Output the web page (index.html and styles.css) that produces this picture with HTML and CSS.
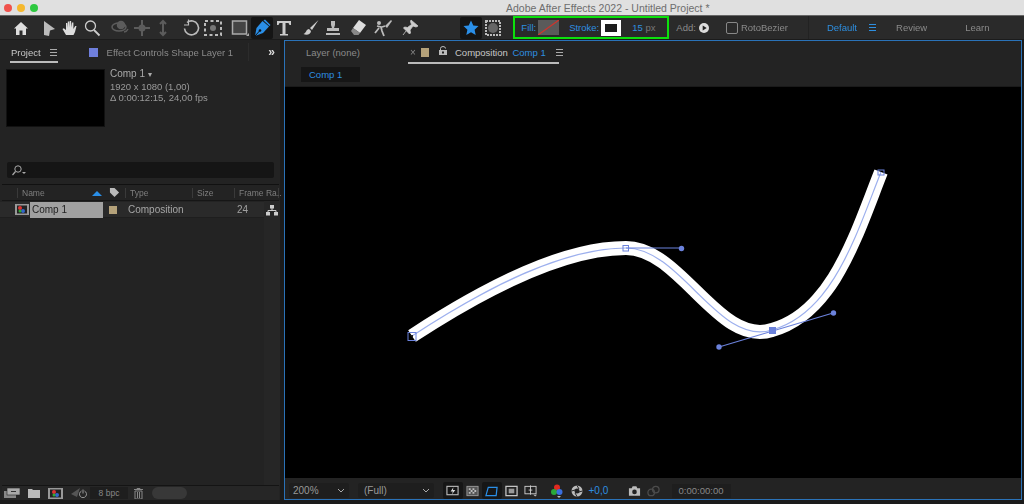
FILE: index.html
```html
<!DOCTYPE html>
<html lang="en">
<head>
<meta charset="utf-8">
<title>Adobe After Effects 2022 - Untitled Project *</title>
<link rel="stylesheet" href="styles.css">
</head>
<body>
<div class="app">
  <header class="titlebar">
    <div class="lights"><span class="light red"></span><span class="light yellow"></span><span class="light green"></span></div>
    <div class="title">Adobe After Effects 2022 - Untitled Project *</div>
  </header>

  <div class="toolbar">
    <span class="tool first"><svg viewBox="0 0 22 22"><path d="M4 11.500 11 5l7 6.500h-2V18h-3.500v-4.500h-3V18H6v-6.500z" fill="#ddd"/></svg></span>
    <span class="tool g"><svg viewBox="0 0 22 22"><path d="M6 4l11 8-5 1.500-1 5.500-5-1z" fill="#bbb"/></svg></span>
    <span class="tool"><svg viewBox="0 0 22 22"><path d="M7 18 3.500 12l1.300-.8L7 13V6h1.300l.5 5V4.500h1.400l.5 6V4h1.400l.4 6.500L13 5.500h1.400V12l1.800-3h1.300L16 15l-1.500 3z" fill="#ddd"/></svg></span>
    <span class="tool"><svg viewBox="0 0 22 22" fill="none" stroke="#ccc" stroke-width="1.300"><circle cx="9.500" cy="9" r="5"/><path d="m13 13 5.500 5.500" stroke-width="1.800"/></svg></span>
    <span class="tool g"><svg viewBox="0 0 22 22" fill="none" stroke="#5c5c5c" stroke-width="1.500"><ellipse cx="10" cy="10" rx="7" ry="4"/><circle cx="12" cy="8" r="3.500" fill="#5c5c5c"/><path d="M15 15a5 5 0 0 0 4-3"/></svg></span>
    <span class="tool"><svg viewBox="0 0 22 22" fill="none" stroke="#5c5c5c" stroke-width="2"><path d="M11 3v16M3 11h16"/><circle cx="11" cy="11" r="2.500" fill="#5c5c5c"/></svg></span>
    <span class="tool"><svg viewBox="0 0 22 22" fill="none" stroke="#5c5c5c" stroke-width="2"><path d="M11 4v14M8 7l3-3 3 3M8 15l3 3 3-3"/></svg></span>
    <span class="tool g"><svg viewBox="0 0 22 22" fill="none" stroke="#bbb" stroke-width="1.600"><path d="M7 5.500a7 7 0 1 1-2.500 6"/><path d="M8.500 2.500v5.500H4" stroke-width="1.200"/></svg></span>
    <span class="tool"><svg viewBox="0 0 22 22" fill="none" stroke="#bbb" stroke-width="2"><rect x="3" y="4" width="16" height="14" stroke-dasharray="3 2.500"/><circle cx="11" cy="11" r="3" fill="#777" stroke="none"/></svg></span>
    <span class="tool g"><svg viewBox="0 0 22 22"><rect x="3.500" y="4" width="14" height="13" fill="#444" stroke="#aaa" stroke-width="1.500"/><path d="M17 19h3v-3z" fill="#aaa"/></svg></span>
    <span class="tool active"><svg viewBox="0 0 22 22"><path d="M4 19l1.500-8 6-7 6.500 5.500-6 6.500z" fill="#2a8fe8"/><path d="M4 19l4.500-5" stroke="#111"/><circle cx="9" cy="13.500" r="1.300" fill="#111"/><path d="M12.500 3.500l6 5.500 1-1-5.500-5.500z" fill="#2a8fe8"/></svg></span>
    <span class="tool"><svg viewBox="0 0 22 22"><path d="M4 4h14v4h-1.500l-1-2H12.500v11H15v1.500H7V17h2.500V6H6.500l-1 2H4z" fill="#ccc"/></svg></span>
    <span class="tool g"><svg viewBox="0 0 22 22"><path d="M18.500 3 10 11l2 2zM9 12c-3 0-2.500 4-5.500 5 3 1.500 7.500.5 7.500-3z" fill="#ccc"/></svg></span>
    <span class="tool"><svg viewBox="0 0 22 22"><path d="M9 4h4v4l-1 3h5v3H5v-3h5L9 8zM4 16h14v2H4z" fill="#bbb"/></svg></span>
    <span class="tool e"><svg viewBox="0 0 22 22"><path d="M12 3l7 5-6 8-7-5z" fill="#ddd"/><path d="M6 11l7 5-1.500 2H7l-3-4z" fill="#888"/></svg></span>
    <span class="tool e"><svg viewBox="0 0 22 22"><circle cx="7" cy="6" r="2" fill="#bbb"/><path d="M5 9l4 1 1 4 2 5M7 11l-4 5M10 10l3-1" fill="none" stroke="#bbb" stroke-width="1.800"/><path d="M13 9l6-6 1 1-5 7z" fill="#bbb"/></svg></span>
    <span class="tool pin"><svg viewBox="0 0 22 22"><path d="M12 3l7 6-2 1-3-1-3 4 .5 3-1 1-6-6 1-1 3 .5 4-3-1-3zM7 14l-3 4" fill="#ccc" stroke="#ccc" stroke-width=".8"/></svg></span>
    <span class="tool star active"><svg viewBox="0 0 22 22"><path d="m11 3.500 2.300 5 5.200.6-3.900 3.600 1.100 5.300-4.700-2.700-4.700 2.700 1.100-5.300-3.900-3.600 5.200-.6z" fill="#2a8fe8"/></svg></span>
    <span class="tool"><svg viewBox="0 0 22 22"><rect x="4" y="4" width="14" height="14" fill="none" stroke="#bbb" stroke-width="2" stroke-dasharray="2 1"/><circle cx="11" cy="11" r="5" fill="#666"/></svg></span>
    <div class="shape-opts">
      <span class="blue lbl">Fill:</span>
      <svg class="fill-sw" viewBox="0 0 21 15"><rect width="21" height="15" fill="#5a5a5a"/><path d="M0 15 21 0" stroke="#d0342c" stroke-width="1.200"/></svg>
      <span class="blue lbl stroke-lbl">Stroke:</span>
      <span class="stroke-sw"><span class="stroke-in"></span></span>
      <span class="px"><span class="blue">15</span> px</span>
    </div>
    <span class="add">Add:</span>
    <svg class="play" viewBox="0 0 10 10"><circle cx="5" cy="5" r="5" fill="#ddd"/><path d="M3.700 2.500v5L7.700 5z" fill="#222"/></svg>
    <span class="check"></span>
    <span class="roto">RotoBezier</span>
    <span class="ws-sep"></span>
    <span class="blue default">Default</span>
    <span class="hamb blue-hamb"></span>
    <span class="ws review">Review</span>
    <span class="ws learn">Learn</span>
  </div>

  <main class="main">
    <section class="project">
      <div class="tabs">
        <span class="tab-project">Project</span>
        <span class="hamb"></span>
        <span class="sq-blue"></span>
        <span class="tab-effects">Effect Controls Shape Layer 1</span>
        <span class="tabs-sep"></span>
        <span class="more">&#187;</span>
      </div>
      <div class="info">
        <div class="thumb"></div>
        <div class="meta">
          <div class="meta-name">Comp 1 <span class="caret">&#9662;</span></div>
          <div>1920 x 1080 (1,00)</div>
          <div>&#916; 0:00:12:15, 24,00 fps</div>
        </div>
      </div>
      <div class="search">
        <svg viewBox="0 0 16 12"><circle cx="7" cy="5" r="3.200" fill="none" stroke="#aaa"/><path d="M4.500 7.500 1.500 11" stroke="#aaa" stroke-width="1.200"/><path d="M11 8h4l-2 2z" fill="#aaa"/></svg>
      </div>
      <div class="thead">
        <span class="col c-name">Name<svg class="sort" viewBox="0 0 10 5"><path d="M0 5 5 0l5 5z" fill="#2a8fe8"/></svg></span>
        <span class="col c-tag"><svg viewBox="0 0 12 12"><path d="M1 1h5l5 5-5 5-5-5z" fill="#bbb"/></svg></span>
        <span class="col c-type">Type</span>
        <span class="col c-size">Size</span>
        <span class="col c-rate">Frame Ra..</span>
      </div>
      <div class="listing">
        <div class="rows">
          <div class="row">
            <svg class="comp-ic" viewBox="0 0 14 11"><rect width="14" height="11" fill="#999"/><rect x="2" y="1.500" width="10" height="8" fill="#222"/><circle cx="5" cy="4" r="2" fill="#d33"/><circle cx="8" cy="7" r="2" fill="#36c"/><circle cx="5" cy="7" r="1.500" fill="#3a3"/></svg>
            <span class="r-name">Comp 1</span>
            <span class="r-sw"></span>
            <span class="r-type">Composition</span>
            <span class="r-rate">24</span>
          </div>
        </div>
        <div class="side">
          <svg viewBox="0 0 12 11"><rect x="4" y="0" width="4" height="3.500" fill="#ccc"/><rect x="0" y="7" width="4" height="3.500" fill="#ccc"/><rect x="8" y="7" width="4" height="3.500" fill="#ccc"/><path d="M6 3v2.500M2 7V5.500h8V7" fill="none" stroke="#ccc"/></svg>
        </div>
      </div>
      <div class="pfoot">
        <svg class="f-ic" viewBox="0 0 16 10"><rect x="0" y="3" width="12" height="7" fill="#888"/><rect x="3" y="0" width="13" height="7" fill="#aaa" stroke="#222" stroke-width=".6"/><rect x="7" y="3" width="5" height="1" fill="#333"/></svg>
        <svg class="f-ic f-folder" viewBox="0 0 12 9"><path d="M0 0h4l1 1h7v8H0z" fill="#bbb"/></svg>
        <svg class="f-ic f-comp" viewBox="0 0 15 11"><rect width="15" height="11" fill="#999"/><rect x="2" y="1.500" width="11" height="8" fill="#222"/><circle cx="6" cy="4" r="2" fill="#d33"/><circle cx="9" cy="7" r="2" fill="#36c"/><circle cx="6" cy="7" r="1.500" fill="#3a3"/></svg>
        <svg class="f-ic f-power" viewBox="0 0 16 10"><path d="M0 6 9 0 6 9z" fill="#555"/><path d="M10.500 3a3.500 3.500 0 1 0 3 0M12 1.500v4" fill="none" stroke="#999"/></svg>
        <span class="bpc">8 bpc</span>
        <svg class="f-ic f-trash" viewBox="0 0 9 11"><path d="M0 1.500h9M3 1.500V.5h3v1M1 3h7v8H1zM3.500 4v6M5.500 4v6" fill="none" stroke="#888"/></svg>
        <span class="pill"></span>
      </div>
    </section>

    <section class="comp">
      <div class="ctabs">
        <span class="c-layer">Layer (none)</span>
        <span class="c-close">&times;</span>
        <span class="sq-tan"></span>
        <svg class="lock" viewBox="0 0 8 9"><path d="M1.500 4V2.500a2.500 2 0 0 1 5 0" fill="none" stroke="#bbb"/><rect x="0" y="4" width="8" height="5" fill="#bbb"/><rect x="3" y="5.500" width="2" height="2" fill="#222"/></svg>
        <span class="c-comp">Composition <span class="blue comp-link">Comp 1</span></span>
        <span class="hamb"></span>
      </div>
      <div class="crumbs"><span class="crumb">Comp 1</span></div>
      <div class="viewer">
        <svg class="art" viewBox="0 0 736 391">
          <g transform="translate(-285 -87)">
            <path class="st-white" d="M412 336C490 285 565 248 626 248C681 248 719 347 772 330C833 313 856 235 881 172"/>
            <path class="st-path" d="M412 336C490 285 565 248 626 248C681 248 719 347 772 330C833 313 856 235 881 172"/>
            <path class="st-handle" d="M626 248H681M719 347 833 313"/>
            <circle class="dot" cx="681.500" cy="248.500" r="2.700"/>
            <circle class="dot" cx="719" cy="347" r="2.700"/>
            <circle class="dot" cx="833.500" cy="313" r="2.700"/>
            <rect class="pt" x="623" y="245.500" width="5.500" height="5.500"/>
            <rect class="pt" x="408" y="332.500" width="8" height="8"/>
            <path class="pt-dark" d="M410 335l3 3v-3z"/>
            <rect class="pt" x="878" y="170" width="6" height="5"/>
            <rect class="pt-fill" x="769" y="327" width="7" height="7"/>
          </g>
        </svg>
      </div>
      <div class="cfoot">
        <span class="sel sel-zoom">200%<svg viewBox="0 0 8 5"><path d="M1 1l3 3 3-3" fill="none" stroke="#aaa"/></svg></span>
        <span class="sel sel-res">(Full)<svg viewBox="0 0 8 5"><path d="M1 1l3 3 3-3" fill="none" stroke="#aaa"/></svg></span>
        <span class="cb cb-first act"><svg viewBox="0 0 14 12"><rect x="1" y="1" width="12" height="9" fill="none" stroke="#bbb" stroke-width="1.200"/><path d="M8 2 5 6.500h2.500L6 10l4-5H7.500z" fill="#ddd"/></svg></span>
        <span class="cb"><svg viewBox="0 0 14 12"><rect x="1" y="1" width="12" height="10" fill="#555" stroke="#999"/><path d="M3 3h2v2H3zM7 3h2v2H7zM5 5h2v2H5zM9 5h2v2H9zM3 7h2v2H3zM7 7h2v2H7z" fill="#bbb"/></svg></span>
        <span class="cb act"><svg viewBox="0 0 14 12"><path d="M3.500 2H13l-1 9H1z" fill="none" stroke="#2a8fe8" stroke-width="1.300"/></svg></span>
        <span class="cb"><svg viewBox="0 0 14 12"><rect x="1" y="1" width="12" height="10" fill="none" stroke="#ccc" stroke-width="1.300"/><rect x="4" y="3.500" width="6" height="5" fill="#999"/></svg></span>
        <span class="cb"><svg viewBox="0 0 14 12"><rect x="1" y="1" width="12" height="8" fill="none" stroke="#ccc"/><path d="M7 0v10M5 5h4" stroke="#ccc"/><path d="M10 10h4l-2 2z" fill="#bbb"/></svg></span>
        <span class="cb cb-rgb"><svg viewBox="0 0 14 14"><circle cx="7" cy="3.500" r="3" fill="#e02a20"/><circle cx="4" cy="8" r="3" fill="#2aa838"/><circle cx="9.500" cy="8" r="3" fill="#3a6fe0"/><path d="M7 12h4l-2 2z" fill="#bbb"/></svg></span>
        <span class="cb cb-exp"><svg viewBox="0 0 14 14"><circle cx="7" cy="7" r="5.500" fill="#bbb"/><circle cx="7" cy="7" r="2.500" fill="#222"/><path d="M7 1.500 9 5M12.500 7l-3.500 1M7 12.500 5 9M1.500 7 5 6" stroke="#222"/></svg></span>
        <span class="blue exp-val">+0,0</span>
        <span class="cb cb-cam"><svg viewBox="0 0 14 12"><path d="M1 3h3l1-2h4l1 2h3v8H1z" fill="#bbb"/><circle cx="7" cy="7" r="2.500" fill="#222"/></svg></span>
        <span class="cb"><svg viewBox="0 0 14 12"><circle cx="4.500" cy="7.500" r="3.500" fill="none" stroke="#4c4c4c" stroke-width="1.400"/><circle cx="9.500" cy="4.500" r="3.500" fill="none" stroke="#4c4c4c" stroke-width="1.400"/></svg></span>
        <span class="time">0:00:00:00</span>
      </div>
    </section>
  </main>
</div>
</body>
</html>
```

FILE: styles.css
```css
* { box-sizing: border-box; }
html, body { margin: 0; padding: 0; }
body { width: 1024px; height: 504px; overflow: hidden; background: #1b1b1b; font-family: "Liberation Sans", Arial, sans-serif; font-size: 9.500px; color: #a6a6a6; }
svg { display: block; }
.app { display: flex; flex-direction: column; height: 504px; filter: blur(0.35px); }
.blue { color: #2e8fe0; }

.titlebar { height: 16px; background: #e0e0e0; border-bottom: 1px solid #666; display: flex; align-items: center; flex-shrink: 0; }
.lights { display: flex; gap: 5px; padding-left: 4px; }
.light { width: 8px; height: 8px; border-radius: 50%; }
.red { background: #f0524c; }
.yellow { background: #f5b82e; }
.green { background: #2ec840; }
.title { margin-left: 468px; font-size: 10.500px; color: #6e6e6e; white-space: nowrap; }

.toolbar { height: 23px; background: #2a2a2a; display: flex; align-items: center; flex-shrink: 0; }
.tool { width: 22px; height: 22px; flex-shrink: 0; margin-right: -0.300px; }
.tool svg { width: 22px; height: 22px; }
.tool.first { margin-left: 10px; }
.tool.g { margin-left: 6px; }
.tool.e { margin-left: 3px; }
.tool.pin { margin-left: 6px; }
.tool.star { margin-left: 39px; }
.tool.active { background: #151515; border-radius: 2px; }
.shape-opts { width: 156px; height: 23px; margin-left: 10px; border: 2px solid #0ce00c; display: flex; align-items: center; padding-left: 6px; }
.lbl { font-size: 9.500px; }
.fill-sw { width: 21px; height: 15px; margin-left: 2px; }
.stroke-lbl { margin-left: 10px; }
.stroke-sw { width: 20px; height: 16px; margin-left: 2px; background: #fff; padding: 4px; }
.stroke-in { display: block; width: 12px; height: 8px; background: #1c1c1c; }
.px { margin-left: 11px; color: #777; white-space: nowrap; }
.add { margin-left: 7px; color: #8a8a8a; }
.play { width: 10px; height: 10px; margin-left: 3px; }
.check { width: 12px; height: 12px; margin-left: 17px; border: 1.500px solid #888; border-radius: 2px; }
.roto { margin-left: 3px; color: #8a8a8a; }
.ws-sep { width: 1px; height: 23px; margin-left: 20px; background: #222; }
.default { margin-left: 18px; }
.hamb { display: block; width: 7px; height: 7px; border-top: 1px solid #aaa; border-bottom: 1px solid #aaa; position: relative; flex-shrink: 0; }
.hamb::after { content: ""; position: absolute; left: 0; right: 0; top: 2px; height: 1px; background: #aaa; }
.blue-hamb { margin-left: 12px; border-color: #2e8fe0; }
.blue-hamb::after { background: #2e8fe0; }
.ws { color: #8a8a8a; }
.review { margin-left: 20px; }
.learn { margin-left: 38px; }

.main { flex: 1; display: flex; gap: 4px; padding: 1px 2px 4px 0; min-height: 0; }

.project { width: 280px; display: flex; flex-direction: column; background: #232323; flex-shrink: 0; }
.tabs { height: 24px; display: flex; align-items: center; flex-shrink: 0; position: relative; }
.tab-project { margin-left: 11px; color: #c8c8c8; position: relative; }
.tab-project::after { content: ""; position: absolute; left: -1px; right: -17px; bottom: -5px; height: 2px; background: #bbb; }
.tabs .hamb { margin-left: 9px; }
.sq-blue { width: 9px; height: 9px; margin-left: 32px; background: #6f7fdc; }
.tab-effects { margin-left: 9px; color: #8a8a8a; white-space: nowrap; }
.tabs-sep { width: 1px; height: 18px; margin-left: 15px; background: #2c2c2c; }
.more { margin-left: 19px; color: #ddd; font-size: 12px; line-height: 12px; font-weight: bold; }
.info { display: flex; padding: 5px 0 0 6px; height: 98px; flex-shrink: 0; }
.thumb { width: 99px; height: 58px; background: #000; border: 1px solid #111; }
.meta { margin-left: 5px; line-height: 11.500px; color: #9a9a9a; white-space: nowrap; margin-top: -1px; }
.meta-name { color: #aaa; font-size: 10px; }
.caret { font-size: 8px; }
.search { height: 16px; margin: 0 6px 0 7px; background: #151515; border-radius: 2px; display: flex; align-items: center; padding-left: 4px; flex-shrink: 0; }
.search svg { width: 16px; height: 12px; }
.thead { margin-top: 6px; height: 17px; border-top: 1px solid #111; border-bottom: 1px solid #161616; display: flex; align-items: center; padding-left: 15px; font-size: 8.500px; margin-left: 2px; margin-right: 1px; flex-shrink: 0; color: #7f7f7f; }
.col { display: flex; align-items: center; height: 10px; white-space: nowrap; border-left: 1px solid #3a3a3a; padding-left: 4px; }
.c-name { width: 90px; position: relative; }
.sort { width: 10px; height: 5px; position: absolute; right: 5px; top: 3px; }
.c-tag { width: 18px; border-left: 0; padding-left: 2px; }
.c-tag svg { width: 11px; height: 11px; }
.c-type { width: 67px; }
.c-size { width: 42px; }
.c-rate { width: 45px; border-right: 1px solid #3a3a3a; }
.listing { flex: 1; display: flex; min-height: 0; }
.rows { flex: 1; padding-top: 1px; }
.row { height: 16px; background: #2a2a2a; display: flex; align-items: center; padding-left: 15px; border-bottom: 1px solid #1e1e1e; font-size: 10px; }
.comp-ic { width: 14px; height: 11px; }
.r-name { width: 73px; height: 16px; margin-left: 1px; background: #a0a0a0; color: #222; line-height: 16px; padding-left: 2px; }
.r-sw { width: 8px; height: 8px; margin-left: 6px; background: #b5a27a; }
.r-type { margin-left: 11px; width: 109px; }
.r-rate { color: #a0a0a0; }
.side { width: 16px; background: #262626; padding: 3px 0 0 2px; }
.side svg { width: 12px; height: 11px; margin-top: 1px; }
.pfoot { height: 15px; border-top: 1px solid #141414; margin-left: 2px; margin-right: 1px; display: flex; align-items: center; padding-left: 2px; background: #262626; flex-shrink: 0; }
.f-ic { width: 16px; height: 10px; flex-shrink: 0; }
.f-folder { width: 12px; height: 9px; margin-left: 8px; }
.f-comp { width: 15px; height: 11px; margin-left: 8px; }
.f-power { margin-left: 8px; }
.bpc { width: 38px; height: 12px; line-height: 12px; margin-left: 3px; background: #1e1e1e; text-align: center; font-size: 8.500px; color: #888; flex-shrink: 0; }
.f-trash { width: 9px; height: 11px; margin-left: 6px; }
.pill { width: 35px; height: 12px; margin-left: 9px; border-radius: 6px; background: #383838; }

.comp { flex: 1; display: flex; flex-direction: column; background: #232323; border: 1px solid #2a72b8; min-width: 0; }
.ctabs { height: 24px; display: flex; align-items: center; padding: 0 0 2px 21px; flex-shrink: 0; }
.c-layer { color: #8a8a8a; width: 104px; white-space: nowrap; }
.c-close { color: #888; width: 10px; font-size: 10px; position: relative; }
.c-close::after { content: ""; position: absolute; left: -2px; width: 151px; top: 15px; height: 2px; background: #bbb; }
.sq-tan { width: 8px; height: 9px; margin-left: 1px; background: #b5a27a; }
.lock { width: 8px; height: 9px; margin-left: 10px; margin-top: -3px; }
.c-comp { margin-left: 8px; color: #c8c8c8; white-space: nowrap; }
.comp-link { margin-left: 2px; }
.ctabs .hamb { margin-left: 10px; }
.crumbs { height: 22px; flex-shrink: 0; padding: 2px 0 0 16px; border-bottom: 1px solid #1a1a1a; }
.crumb { display: block; width: 59px; height: 15px; line-height: 15px; padding-left: 8px; background: #161616; color: #2e8fe0; }
.viewer { height: 391px; background: #000; flex-shrink: 0; }
.art { width: 736px; height: 391px; }
.st-white { stroke: #fff; stroke-width: 14; fill: none; }
.st-path { stroke: #9db0ee; stroke-width: 1.200; fill: none; }
.st-handle { stroke: #6b82dc; stroke-width: 1.200; fill: none; }
.dot { fill: #6b82dc; }
.pt { fill: none; stroke: #6b82dc; stroke-width: 1; }
.pt-fill { fill: #6b82dc; }
.pt-dark { fill: #222; }
.cfoot { flex: 1; display: flex; align-items: center; padding: 4px 0 0 4px; min-height: 0; color: #999; }
.sel { display: flex; align-items: center; justify-content: space-between; height: 15px; background: #1e1e1e; padding: 0 4px; border-radius: 2px; font-size: 10px; flex-shrink: 0; }
.sel svg { width: 8px; height: 5px; }
.sel-zoom { width: 60px; }
.sel-res { width: 76px; margin-left: 9px; padding-left: 6px; }
.cb { width: 19.500px; height: 17px; display: flex; align-items: center; justify-content: center; flex-shrink: 0; }
.cb svg { width: 13px; height: 12px; }
.cb.act { background: #161616; border-radius: 2px; }
.cb-first { margin-left: 9px; }
.cb-rgb { margin-left: 7px; }
.cb-rgb svg, .cb-exp svg { width: 14px; height: 14px; }
.cb-exp { margin-left: 0; }
.exp-val { margin-left: 2px; width: 36px; font-size: 10px; }
.time { width: 59px; height: 14px; line-height: 14px; margin-left: 8px; background: #1e1e1e; text-align: center; color: #888; font-size: 9.500px; }
```
